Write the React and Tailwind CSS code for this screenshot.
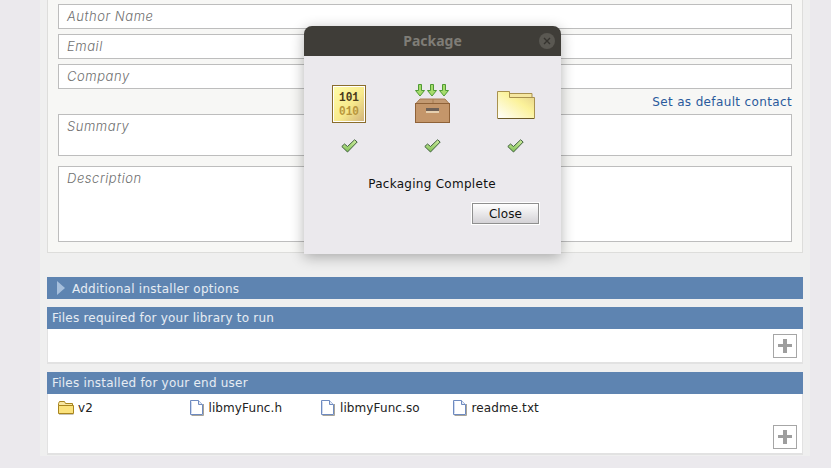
import { useId } from 'react';

const dejavu = 'font-["DejaVu_Sans",sans-serif]';

const TextField = ({ label, className = 'h-[25px]' }) => (
  <div className={`${className} bg-white border border-[#bdbdbd] pl-[8px] pt-[3px] text-[13px] leading-[16px] italic font-light tracking-[0.55px] text-[#6f6f6f] font-["Inter",sans-serif]`}>
    {label}
  </div>
);

const BinaryIcon = () => {
  const id = useId();
  return (
    <svg width="34" height="38" viewBox="0 0 34 38">
      <defs>
        <linearGradient id={id} x1="0" y1="0" x2="1" y2="1">
          <stop offset="0" stopColor="#fffca8" />
          <stop offset="0.55" stopColor="#f8ea8c" />
          <stop offset="1" stopColor="#d2b47c" />
        </linearGradient>
      </defs>
      <rect x="0.5" y="0.5" width="33" height="37" fill="#fff" stroke="#8a6d2c" />
      <rect x="2" y="2" width="30" height="34" fill={`url(#${id})`} />
      <text x="7" y="16" textLength="20" lengthAdjust="spacingAndGlyphs" fontFamily="Liberation Mono, monospace" fontWeight="700" fontSize="12" fill="#4a3a1a">101</text>
      <text x="7" y="30" textLength="20" lengthAdjust="spacingAndGlyphs" fontFamily="Liberation Mono, monospace" fontWeight="700" fontSize="12" fill="#b8963c">010</text>
    </svg>
  );
};

const BoxIcon = () => (
  <svg width="36" height="40" viewBox="0 0 36 40">
    {[5, 17, 29].map((x) => (
      <path key={x} d={`M${x - 1.5} 0.5h3v6h3l-4.5 5.5l-4.5 -5.5h3z`} fill="#a6dc6c" stroke="#4f9a35" />
    ))}
    <path d="M5 15h25l4.5 5H0.5z" fill="#c39a72" stroke="#a67c52" />
    <path d="M18 15v5" stroke="#a67c52" />
    <rect x="0.5" y="19.5" width="34" height="19" fill="#c4966a" stroke="#8f6238" />
    <rect x="11" y="24" width="13" height="3" fill="#6e6056" />
    <rect x="11" y="27" width="13" height="2" fill="#e6cfae" />
  </svg>
);

const FolderIcon = () => {
  const id = useId();
  return (
    <svg width="38" height="29" viewBox="0 0 38 29">
      <defs>
        <linearGradient id={id} x1="0" y1="1" x2="1" y2="0">
          <stop offset="0" stopColor="#ffffff" />
          <stop offset="0.6" stopColor="#fbf29a" />
          <stop offset="1" stopColor="#e2cd8a" />
        </linearGradient>
      </defs>
      <path d="M11.5 2.5H35V9H11.5z" fill="#f5e7a0" stroke="#a8914f" />
      <path d="M0.5 0.5H12.5V6.5H37.5V27.5H0.5z" fill={`url(#${id})`} stroke="#a8914f" />
      <path d="M1 27.5H37" stroke="#6b5a28" />
    </svg>
  );
};

const CheckIcon = () => {
  const id = useId();
  return (
    <svg width="17" height="14" viewBox="0 0 17 14">
      <defs>
        <linearGradient id={id} x1="0" y1="0" x2="0" y2="1">
          <stop offset="0" stopColor="#cfeea0" />
          <stop offset="1" stopColor="#7fbf55" />
        </linearGradient>
      </defs>
      <path d="M0.8 7.5L3.5 5L6.5 7.5L13.6 0.8L16.2 3L6.5 13z" fill={`url(#${id})`} stroke="#3f5f3c" strokeLinejoin="round" />
    </svg>
  );
};

const FileIcon = () => (
  <svg width="14" height="16" viewBox="0 0 14 16" className="shrink-0">
    <path d="M1.5 15.5H13.5V4" fill="none" stroke="#a8a498" />
    <path d="M0.5 0.5H8.5L12.5 4.5V14.5H0.5z" fill="#fff" stroke="#6f8bc0" />
    <path d="M8.5 0.5V4.5H12.5" fill="#e4eaf6" stroke="#6f8bc0" />
    <path d="M1.5 1.5V13.5" stroke="#cdd9f0" />
  </svg>
);

const SmallFolderIcon = () => (
  <svg width="16" height="14" viewBox="0 0 16 14" className="shrink-0">
    <path d="M0.5 2.5L1.5 0.5H6.5L7.5 2.5H14.5V4.5H0.5z" fill="#f8e6a0" stroke="#a8851f" />
    <path d="M0.5 4.5H15.5V12.5H0.5z" fill="#fbe27c" stroke="#a8851f" />
    <path d="M1 13.5H15.5" stroke="#c8c4b8" />
  </svg>
);

const PlusButton = () => (
  <div className="w-[24px] h-[24px] border border-[#a6a6a6] flex items-center justify-center">
    <svg width="14" height="14" viewBox="0 0 14 14">
      <path d="M5 0h4v5h5v3H9v6H5V8H0V5h5z" fill="#9e9e9e" />
    </svg>
  </div>
);

const SectionBar = ({ title }) => (
  <div className={`h-[22px] bg-[#5e84b1] text-white/85 text-[12px] tracking-[0.22px] leading-[22px] pl-[5px] ${dejavu}`}>
    {title}
  </div>
);

const files = [
  { name: 'v2', folder: true },
  { name: 'libmyFunc.h' },
  { name: 'libmyFunc.so' },
  { name: 'readme.txt' },
];

export default function App() {
  return (
    <div className="relative w-[831px] h-[468px] overflow-hidden bg-[#ebe9ed]">
      <div className="ml-[40px] w-[770px] h-[456px] bg-[#efefef] px-[7px]">
        {/* contact form */}
        <div className="h-[253px] bg-[#f7f7f5] border-x border-b border-[#dddddb] px-[10px] pt-[4px]">
          <div className="flex flex-col gap-[5px]">
            <TextField label="Author Name" />
            <TextField label="Email" />
            <TextField label="Company" />
          </div>
          <div className={`h-[25px] pt-[1px] text-right text-[12px] tracking-[0.36px] leading-[25px] text-[#2a5a9c] ${dejavu}`}>
            Set as default contact
          </div>
          <TextField label="Summary" className="h-[42px]" />
          <TextField label="Description" className="h-[76px] mt-[10px]" />
        </div>

        {/* installer sections */}
        <div className={`mt-[24px] h-[22px] bg-[#5e84b1] flex items-center pl-[10px] gap-[7px] text-white/85 text-[12px] tracking-[0.25px] ${dejavu}`}>
          <svg width="8" height="14" viewBox="0 0 8 14">
            <path d="M0 0l8 7l-8 7z" fill="#a6bfdc" />
          </svg>
          <span className="pt-[1px]">Additional installer options</span>
        </div>

        <div className="mt-[8px]">
          <SectionBar title="Files required for your library to run" />
          <div className="h-[35px] bg-white border-x border-b-2 border-[#e2e2e2] flex justify-end items-end pr-[5px] pb-[4px]">
            <PlusButton />
          </div>
        </div>

        <div className="mt-[8px]">
          <SectionBar title="Files installed for your end user" />
          <div className="h-[61px] bg-white border-x border-b-2 border-[#e2e2e2] relative">
            <div className={`flex pl-[10px] pt-[6px] text-[12px] tracking-[0.1px] leading-[16px] text-[#222] ${dejavu}`}>
              {files.map((f) => (
                <div key={f.name} className="w-[131.5px] flex items-center gap-[4px]">
                  {f.folder ? <SmallFolderIcon /> : <FileIcon />}
                  <span className={f.folder ? '' : 'ml-[1px]'}>{f.name}</span>
                </div>
              ))}
            </div>
            <div className="absolute right-[5px] bottom-[4px]">
              <PlusButton />
            </div>
          </div>
        </div>
      </div>

      {/* Package dialog */}
      <div className={`absolute left-[304px] top-[26px] w-[257px] h-[228px] bg-[#ebe9ed] rounded-t-[8px] shadow-[0_3px_14px_rgba(0,0,0,0.3)] ${dejavu}`}>
        <div className='relative h-[30px] bg-[#3f3d38] rounded-t-[8px] text-center text-[14px] leading-[30px] font-bold text-[#7f7d77] font-["Noto_Sans",sans-serif]'>
          Package
          <div className="absolute right-[6px] top-[7px] w-[16px] h-[16px] rounded-full bg-[#5a5852] flex items-center justify-center">
            <svg width="8" height="8" viewBox="0 0 8 8">
              <path d="M1 1l6 6M7 1l-6 6" stroke="#35332f" strokeWidth="1.4" />
            </svg>
          </div>
        </div>
        <div className="flex justify-center pt-[28px] pr-[2px]">
          <div className="w-[83px] h-[40px] flex justify-center items-end pb-[1px]"><BinaryIcon /></div>
          <div className="w-[83px] h-[40px] flex justify-center items-end pl-[2px]"><BoxIcon /></div>
          <div className="w-[83px] h-[40px] flex justify-center items-center pt-[3px] pl-[2px]"><FolderIcon /></div>
        </div>
        <div className="flex justify-center pt-[15px]">
          {[0, 1, 2].map((i) => (
            <div key={i} className="w-[83px] flex justify-center"><CheckIcon /></div>
          ))}
        </div>
        <div className="mt-[23px] text-center text-[12px] tracking-[0.28px] leading-[16px] text-[#111] pr-[1px]">Packaging Complete</div>
        <div className="flex justify-end pr-[22px] mt-[11px]">
          <button className="w-[67px] h-[21px] border border-[#8f8f8f] outline outline-1 outline-white bg-gradient-to-b from-white to-[#d4d2d6] text-[12px] tracking-[0.1px] leading-[20px] text-[#111]">
            Close
          </button>
        </div>
      </div>
    </div>
  );
}
